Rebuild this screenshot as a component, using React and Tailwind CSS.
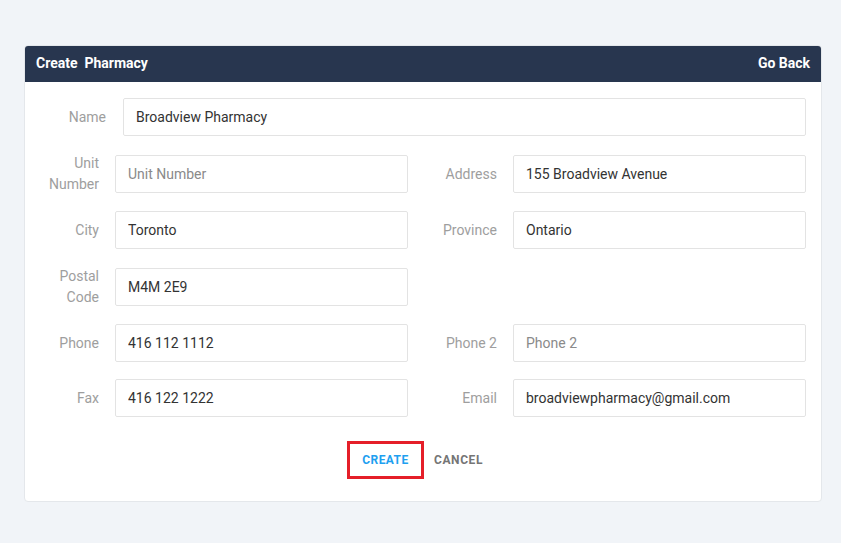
import React from "react";

const font = { fontFamily: "Roboto, 'Liberation Sans', sans-serif" };

function Field({ label, value, placeholder, labelW = "w-[59px]", gap = "gap-4" }) {
  return (
    <div className={`flex h-[38px] items-center ${gap} flex-1`}>
      <label className={`${labelW} shrink-0 flex h-[38px] items-center justify-end text-right text-[14px] leading-[21px] text-[#9e9e9e]`}>{label}</label>
      <input
        readOnly
        value={value || ""}
        placeholder={placeholder}
        className="h-[38px] flex-1 min-w-0 rounded-[2px] border border-[#e3e3e3] bg-white px-3 text-[14px] text-[#333] placeholder:text-[#8a8a8a] outline-none"
        style={font}
      />
    </div>
  );
}

function Empty() {
  return <div className="flex-1" />;
}

export default function App() {
  return (
    <div className="min-h-[543px] w-full bg-[#f1f4f8] pt-[45px] px-[24px] pb-[41px]" style={font}>
      <div className="w-[798px] rounded-[4px] border border-[#e4e7eb] bg-white overflow-hidden">
        <div className="flex h-[37px] items-center justify-between bg-[#28364f] px-[12px] text-[14px] font-bold text-white -mx-px -mt-px">
          <span>Create&nbsp; Pharmacy</span>
          <span>Go Back</span>
        </div>
        <div className="flex flex-col px-[15px] pt-[16px] pb-[22px]">
          <div className="flex">
            <Field label="Name" value="Broadview Pharmacy" labelW="w-[66px]" gap="gap-[17px]" />
          </div>
          <div className="mt-[19px] flex gap-[30px]">
            <Field label="Unit Number" placeholder="Unit Number" />
            <Field label="Address" value="155 Broadview Avenue" />
          </div>
          <div className="mt-[18px] flex gap-[30px]">
            <Field label="City" value="Toronto" />
            <Field label="Province" value="Ontario" />
          </div>
          <div className="mt-[19px] flex gap-[30px]">
            <Field label="Postal Code" value="M4M 2E9" />
            <Empty />
          </div>
          <div className="mt-[18px] flex gap-[30px]">
            <Field label="Phone" value="416 112 1112" />
            <Field label="Phone 2" placeholder="Phone 2" />
          </div>
          <div className="mt-[17px] flex gap-[30px]">
            <Field label="Fax" value="416 122 1222" />
            <Field label="Email" value="broadviewpharmacy@gmail.com" />
          </div>
          <div className="mt-[24px] flex justify-center items-center gap-[10px] pr-[16px]">
            <button className="h-[38px] w-[77px] border-[3px] border-[#e51f29] text-[12px] font-bold tracking-[0.4px] text-[#1ea0f0]">
              CREATE
            </button>
            <button className="h-[38px] text-[12px] font-bold tracking-[0.6px] text-[#757575]">
              CANCEL
            </button>
          </div>
        </div>
      </div>
    </div>
  );
}
